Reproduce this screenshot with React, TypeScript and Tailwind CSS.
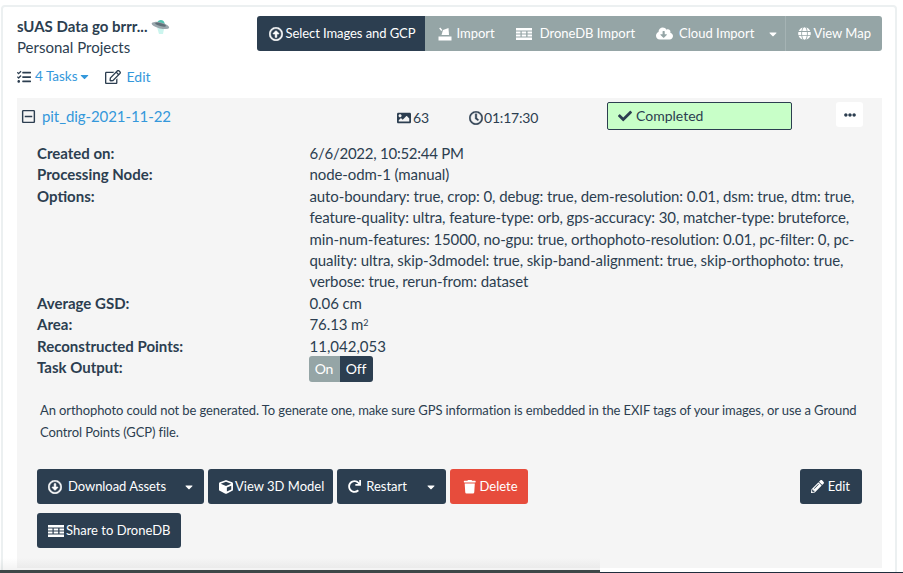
import { ReactNode } from "react";
import {
  FaCaretDown,
  FaCheck,
  FaCloudDownloadAlt,
  FaCube,
  FaEllipsisH,
  FaGlobe,
  FaImage,
  FaPencilAlt,
  FaRedo,
  FaRegArrowAltCircleDown,
  FaRegArrowAltCircleUp,
  FaRegClock,
  FaRegEdit,
  FaRegMinusSquare,
  FaTasks,
  FaTrash,
} from "react-icons/fa";

// DroneDB's grid mark
const DroneDbIcon = () => (
  <svg width="16" height="12" viewBox="0 0 16 12" fill="currentColor">
    <rect x="0" y="0" width="16" height="2.5" />
    <rect x="0" y="3.5" width="4.5" height="2" />
    <rect x="5.7" y="3.5" width="4.5" height="2" />
    <rect x="11.5" y="3.5" width="4.5" height="2" />
    <rect x="0" y="6.5" width="4.5" height="2" />
    <rect x="5.7" y="6.5" width="4.5" height="2" />
    <rect x="11.5" y="6.5" width="4.5" height="2" />
    <rect x="0" y="9.5" width="16" height="2.5" />
  </svg>
);

const ImportIcon = () => (
  <svg width="14" height="14" viewBox="0 0 14 14" fill="currentColor">
    <path d="M2.2 0.5 L4.4 3 L3.3 4 L1.2 1.5 Z" />
    <path d="M5 3 L10.5 1 L11 8 L3.5 8 Z" />
    <rect x="0.5" y="9.5" width="13" height="4" />
  </svg>
);

const UfoIcon = () => (
  <svg width="19" height="17" viewBox="0 0 19 17">
    <path d="M6 9 L13 11 L12 16 L8 16 Z" fill="#bff3ea" opacity="0.8" />
    <g transform="rotate(14 9.5 7)">
      <path d="M5.5 6 C6 0.5 13 0.5 13.5 6 Z" fill="#4fc3b0" />
      <ellipse cx="9.5" cy="7.5" rx="9" ry="3" fill="#9aa7ad" />
      <ellipse cx="9.5" cy="6.6" rx="5.5" ry="1.4" fill="#5f6f78" />
    </g>
  </svg>
);

const Btn = ({
  children,
  className = "",
}: {
  children: ReactNode;
  className?: string;
}) => (
  <button
    className={`h-[35px] flex items-center text-white text-[13px] rounded-[3px] whitespace-nowrap ${className}`}
  >
    {children}
  </button>
);

const Row = ({ label, children }: { label: string; children: ReactNode }) => (
  <div className="flex">
    <div className="w-[272.5px] shrink-0 font-bold">{label}</div>
    <div className="flex-1 min-w-0 tracking-[-0.1px]">{children}</div>
  </div>
);

export default function App() {
  return (
    <div
      className="h-[573px] w-[903px] overflow-hidden bg-white text-[15px] leading-[21.43px] text-[#2c3e50] relative"
      style={{ fontFamily: "Lato, sans-serif" }}
    >
      <div className="ml-px mt-[5px] w-[896px] h-[600px] border-2 border-[#ecf0f1] rounded-[4px] px-[14px] pt-[9px]">
        {/* Project header */}
        <div className="flex justify-between w-[865px]">
          <div>
            <div className="flex items-center gap-[3px] font-bold h-[21px]">
              sUAS Data go brrr... <UfoIcon />
            </div>
            <div className="h-[21px]">Personal Projects</div>
          </div>
          <div className="flex">
            <Btn className="bg-[#2c3e50] rounded-r-none pl-[12px] pr-[10px] gap-[3px] tracking-[-0.08px]">
              <FaRegArrowAltCircleUp className="text-[14px] stroke-[20]" />
              Select Images and GCP
            </Btn>
            <Btn className="bg-[#95a5a6] rounded-none pl-[13px] pr-[11px] gap-[4px]">
              <ImportIcon />
              Import
            </Btn>
            <Btn className="bg-[#95a5a6] rounded-none pl-[10px] pr-[11px] gap-[8px]">
              <DroneDbIcon />
              DroneDB Import
            </Btn>
            <Btn className="bg-[#95a5a6] rounded-none pl-[10px] pr-[6px] gap-[6px]">
              <FaCloudDownloadAlt className="text-[17px]" />
              Cloud Import
              <FaCaretDown className="text-[12px] ml-[7px]" />
            </Btn>
            <Btn className="bg-[#95a5a6] rounded-l-none border-l border-[#a5b3b4] pl-[12px] pr-[11px] gap-[2px]">
              <FaGlobe className="text-[13px]" />
              View Map
            </Btn>
          </div>
        </div>

        {/* Tasks / edit links */}
        <div className="flex items-center h-[21px] mt-[8px] text-[13.5px] text-[#3498db]">
          <FaTasks className="text-[#2c3e50] text-[14px] mr-[4px]" />
          4 Tasks
          <FaCaretDown className="text-[13px]" />
          <FaRegEdit className="text-[#2c3e50] text-[16px] ml-[14px] mr-[6px]" />
          <span className="text-[14px]">Edit</span>
        </div>

        {/* Task panel */}
        <div className="mt-[11px] w-[865px] bg-[#f5f5f5] h-[470px] pt-[4px]">
          <div className="flex items-start h-[31px]">
            <div className="w-[280px] flex items-center pl-[4px] h-[29px] text-[#3498db] text-[15px] tracking-[-0.08px]">
              <FaRegMinusSquare className="text-[#2c3e50] text-[15px] mr-[6px]" />
              pit_dig-2021-11-22
            </div>
            <div className="w-[72px] flex items-center h-[31px] text-[14px] ml-[100px] gap-[2px] tracking-[-0.2px]">
              <FaImage className="text-[14px]" />
              63
            </div>
            <div className="w-[138px] flex items-center h-[31px] text-[14px] gap-[1px] tracking-[-0.2px]">
              <FaRegClock className="text-[14px] stroke-[15]" />
              01:17:30
            </div>
            <div className="w-[185px] h-[28px] border border-[#2c3e50] rounded-[2px] bg-[#c8ffc8] flex items-center pl-[10px] gap-[4px] text-[14px]">
              <FaCheck className="text-[14px]" />
              Completed
            </div>
            <div className="ml-[44px] w-[27px] h-[25px] bg-white rounded-[3px] flex items-center justify-center">
              <FaEllipsisH className="text-[12px]" />
            </div>
          </div>

          <div className="pl-[20px] pr-[20px] mt-[9.75px]">
            <Row label="Created on:">
              <span className="tracking-[-0.25px]">6/6/2022, 10:52:44 PM</span>
            </Row>
            <Row label="Processing Node:">node-odm-1 (manual)</Row>
            <Row label="Options:">
              auto-boundary: true, crop: 0, debug: true, dem-resolution: 0.01, dsm: true, dtm: true,
              feature-quality: ultra, feature-type: orb, gps-accuracy: 30, matcher-type: bruteforce,
              min-num-features: 15000, no-gpu: true, orthophoto-resolution: 0.01, pc-filter: 0, pc-quality:
              ultra, skip-3dmodel: true, skip-band-alignment: true, skip-orthophoto: true, verbose: true,
              rerun-from: dataset
            </Row>
            <Row label="Average GSD:">0.06 cm</Row>
            <Row label="Area:">
              76.13 m<sup className="text-[9px]">2</sup>
            </Row>
            <Row label="Reconstructed Points:">
              <span className="tracking-normal">11,042,053</span>
            </Row>
            <Row label="Task Output:">
              <div className="flex text-[14px] h-[26px] -ml-px -mt-px">
                <div className="w-[31px] bg-[#95a5a6] text-white rounded-l-[3px] flex items-center justify-center">
                  On
                </div>
                <div className="w-[33px] bg-[#2c3e50] text-white rounded-r-[3px] flex items-center justify-center">
                  Off
                </div>
              </div>
            </Row>

            <p className="mt-[17.25px] pl-[3px] text-[13px] leading-[22px] tracking-[-0.1px] w-[840px]">
              An orthophoto could not be generated. To generate one, make sure GPS information is embedded in the EXIF tags of your images, or use a Ground Control Points (GCP) file.
            </p>

            <div className="mt-[26px] flex justify-between">
              <div className="flex flex-wrap gap-x-[4px] gap-y-[9px] w-[560px]">
                <Btn className="bg-[#2c3e50] pl-[11px] pr-[9px] gap-[6px] tracking-[-0.05px]">
                  <FaRegArrowAltCircleDown className="text-[14px] stroke-[20]" />
                  Download Assets
                  <FaCaretDown className="text-[12px] ml-[11px]" />
                </Btn>
                <Btn className="bg-[#2c3e50] pl-[11px] pr-[9px] gap-[2px]">
                  <FaCube className="text-[14px]" />
                  View 3D Model
                </Btn>
                <Btn className="bg-[#2c3e50] pl-[11px] pr-[9px] gap-[5px]">
                  <FaRedo className="text-[13px]" />
                  Restart
                  <FaCaretDown className="text-[12px] ml-[13px]" />
                </Btn>
                <Btn className="bg-[#e74c3c] pl-[13px] pr-[10px] gap-[3px]">
                  <FaTrash className="text-[13.5px]" />
                  Delete
                </Btn>
                <Btn className="bg-[#2c3e50] pl-[11px] pr-[11px] gap-[2px]">
                  <DroneDbIcon />
                  Share to DroneDB
                </Btn>
              </div>
              <Btn className="bg-[#2c3e50] pl-[11px] pr-[12px] gap-[4px]">
                <FaPencilAlt className="text-[13px]" />
                Edit
              </Btn>
            </div>
          </div>
        </div>
      </div>

      {/* Fade and scrollbar strip along the bottom of the window */}
      <div className="absolute left-0 bottom-[3px] w-[600px] h-[12px] bg-gradient-to-b from-transparent to-black/5" />
      <div className="absolute left-0 bottom-0 w-[600px] h-[3px] bg-[#3d4747]" />
      <div className="absolute left-[600px] bottom-0 right-0 h-px bg-[#1f2d3d]" />
    </div>
  );
}
